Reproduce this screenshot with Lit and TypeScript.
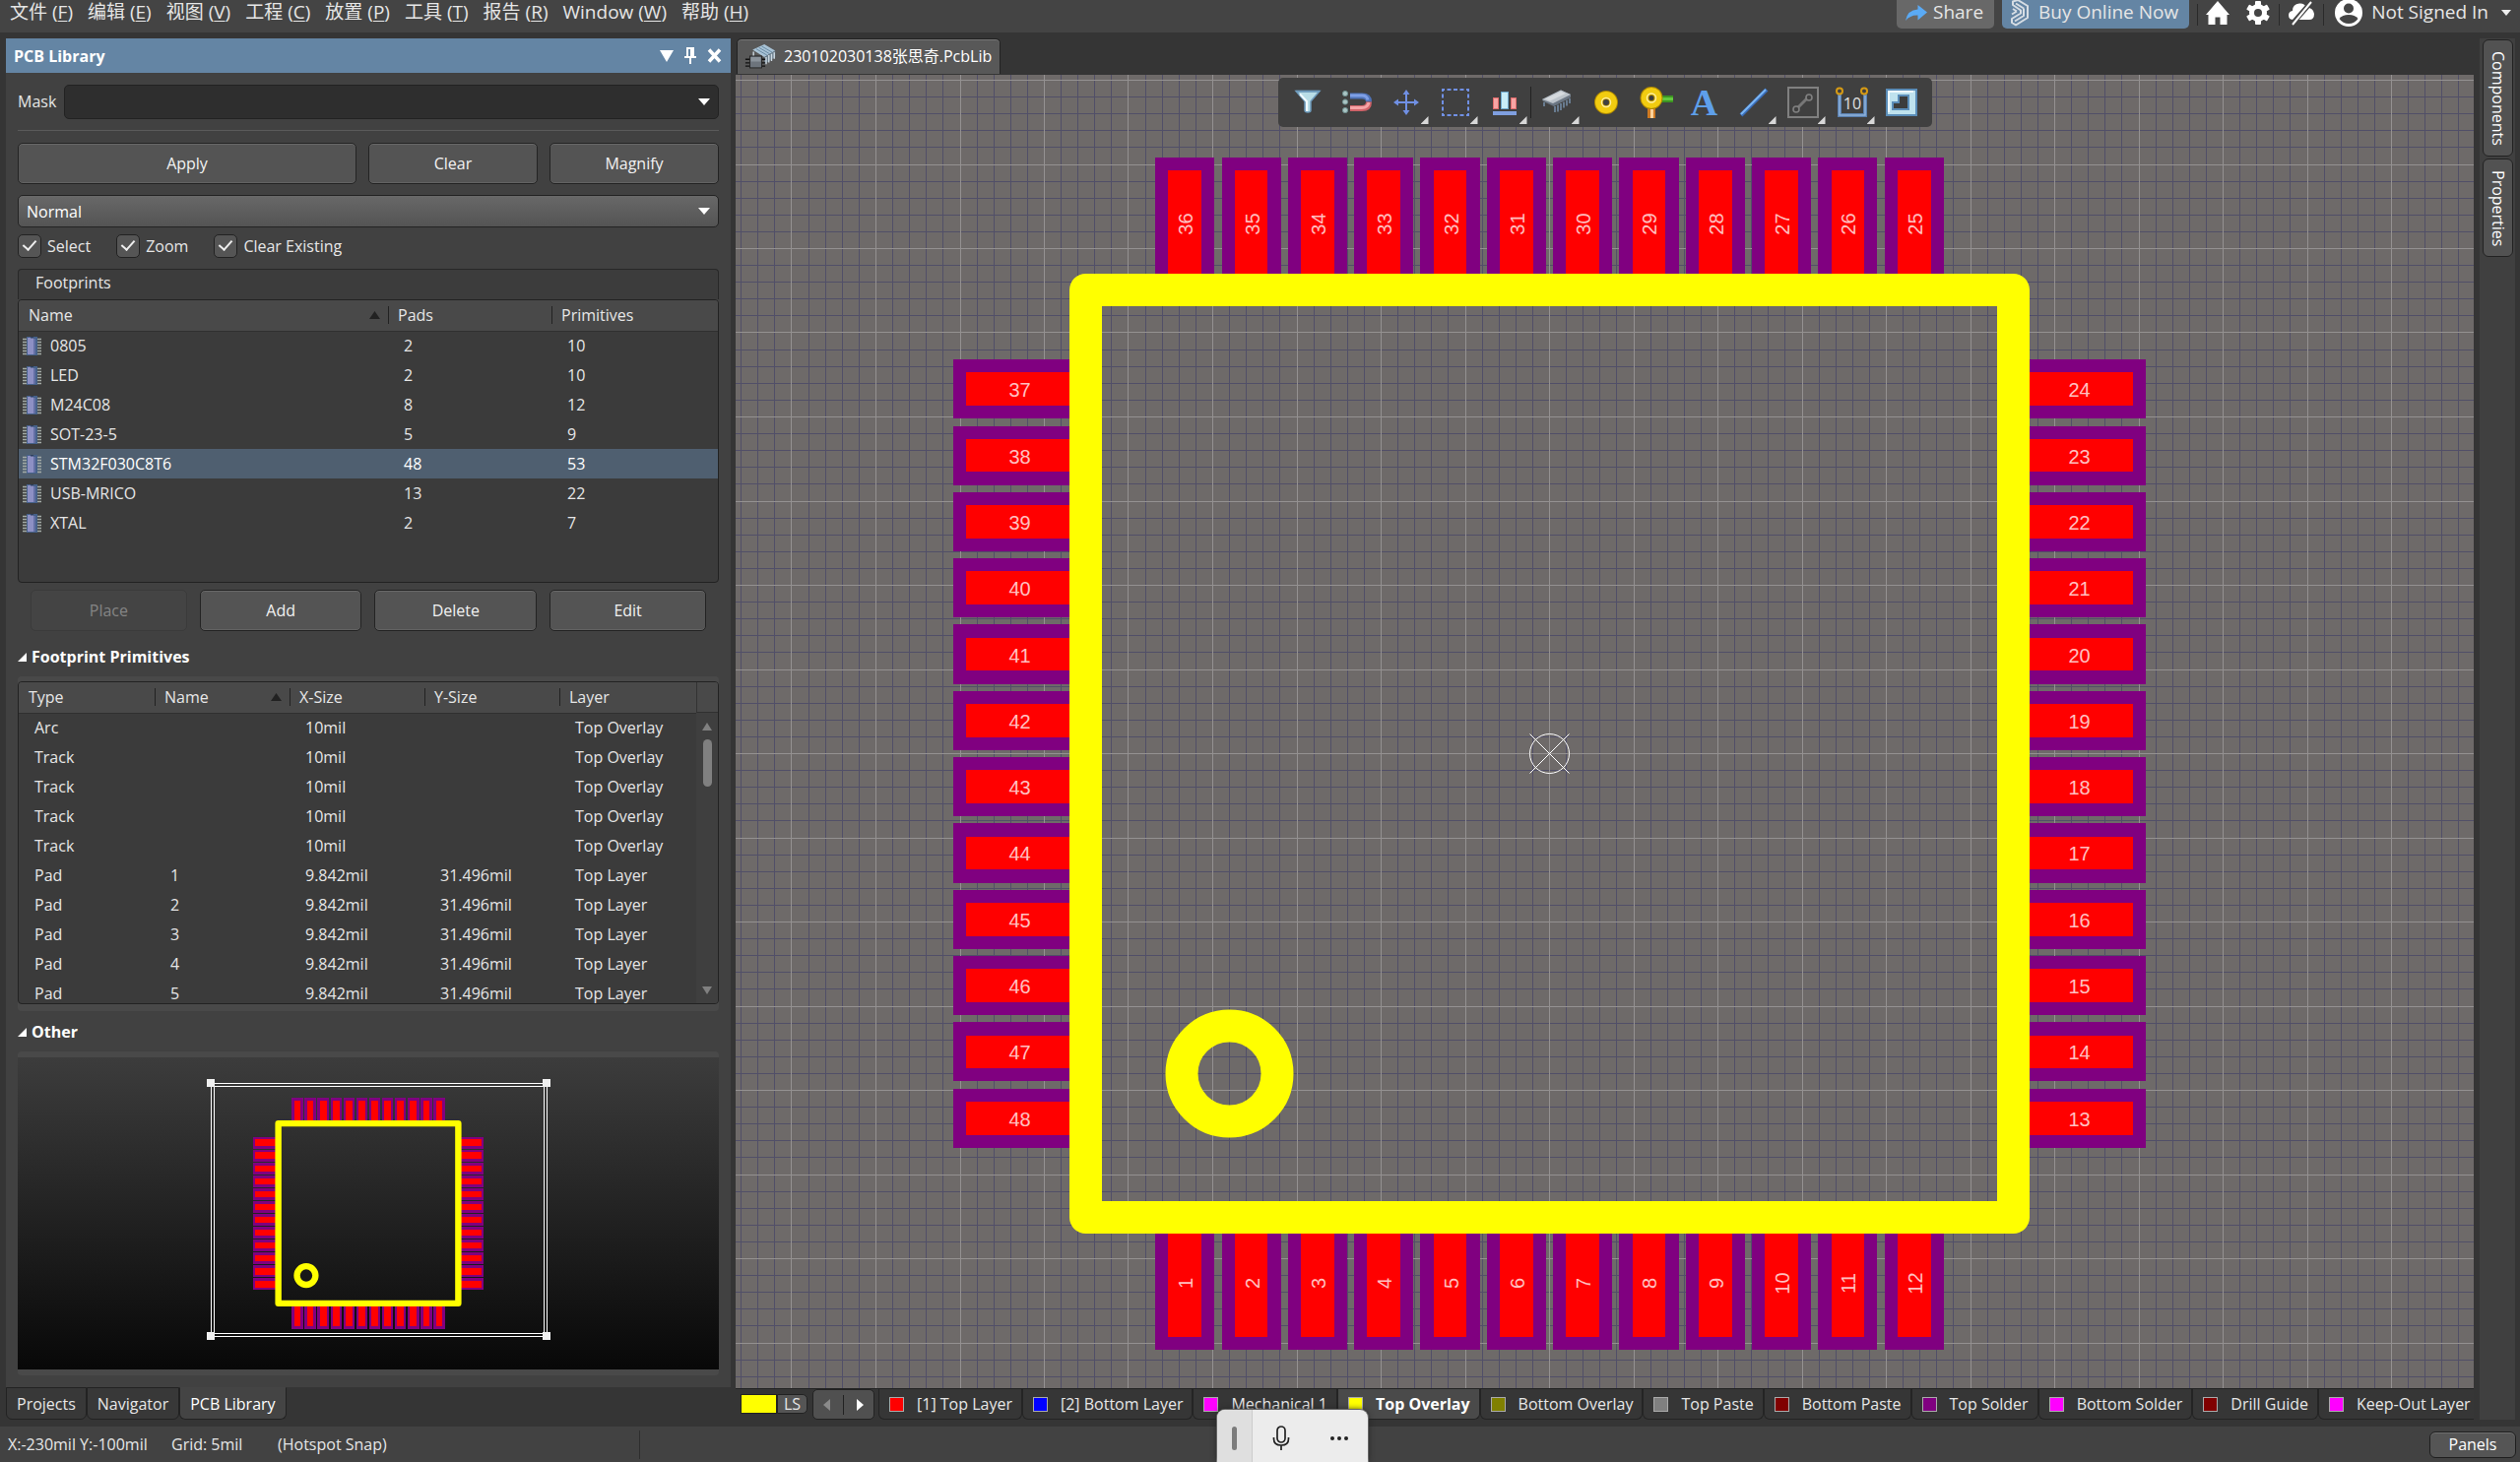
import { LitElement, html, svg, css } from "lit";
import { customElement, state } from "lit/decorators.js";
import { classMap } from "lit/directives/class-map.js";

/* ---------- shared styles ---------- */

const base = css`
  * { box-sizing: border-box; }
  :host {
    font-family: "Open Sans", "Noto Sans CJK SC", sans-serif;
    font-size: 16px;
    line-height: 20px;
    color: #e6e6e6;
  }
  svg { display: block; }
  button, input, select {
    font: inherit;
    color: inherit;
    margin: 0;
  }
  button {
    padding: 0;
    border: 0;
    background: none;
    white-space: nowrap;
  }
`;

/* ---------- data ---------- */

const MENUS: [string, string][] = [
  ["文件", "F"], ["编辑", "E"], ["视图", "V"], ["工程", "C"], ["放置", "P"],
  ["工具", "T"], ["报告", "R"], ["Window", "W"], ["帮助", "H"],
];

const FOOTPRINTS: [string, number, number][] = [
  ["0805", 2, 10],
  ["LED", 2, 10],
  ["M24C08", 8, 12],
  ["SOT-23-5", 5, 9],
  ["STM32F030C8T6", 48, 53],
  ["USB-MRICO", 13, 22],
  ["XTAL", 2, 7],
];

const PRIMITIVES: string[][] = [
  ["Arc", "", "10mil", "", "Top Overlay"],
  ["Track", "", "10mil", "", "Top Overlay"],
  ["Track", "", "10mil", "", "Top Overlay"],
  ["Track", "", "10mil", "", "Top Overlay"],
  ["Track", "", "10mil", "", "Top Overlay"],
  ["Pad", "1", "9.842mil", "31.496mil", "Top Layer"],
  ["Pad", "2", "9.842mil", "31.496mil", "Top Layer"],
  ["Pad", "3", "9.842mil", "31.496mil", "Top Layer"],
  ["Pad", "4", "9.842mil", "31.496mil", "Top Layer"],
  ["Pad", "5", "9.842mil", "31.496mil", "Top Layer"],
];

const LAYERS: [string, string][] = [
  ["[1] Top Layer", "#ff0000"],
  ["[2] Bottom Layer", "#0000ff"],
  ["Mechanical 1", "#ff00ff"],
  ["Top Overlay", "#ffff00"],
  ["Bottom Overlay", "#808000"],
  ["Top Paste", "#808080"],
  ["Bottom Paste", "#800000"],
  ["Top Solder", "#800080"],
  ["Bottom Solder", "#ff00ff"],
  ["Drill Guide", "#800000"],
  ["Keep-Out Layer", "#ff00ff"],
];

/* ---------- LQFP-48 drawing, in canvas units around its centre ---------- */

const PITCH = 67.31;
const OUTER = 605.5;
const PAD_W = 33.6;
const PAD_L = 107.7;
const MASK = 13.3;

function sidePads(angle: number) {
  const out = [];
  for (let i = 0; i < 12; i++) {
    const c = (i - 5.5) * PITCH;
    out.push(svg`
      <rect x=${c - PAD_W / 2 - MASK} y=${-OUTER} width=${PAD_W + 2 * MASK} height=${PAD_L + 2 * MASK} fill="#800080"></rect>
      <rect x=${c - PAD_W / 2} y=${-OUTER + MASK} width=${PAD_W} height=${PAD_L} fill="#ff0000"></rect>`);
  }
  return svg`<g transform="rotate(${angle})">${out}</g>`;
}

function chip() {
  return svg`
    <g shape-rendering="crispEdges">${[0, 90, 180, 270].map(sidePads)}</g>
    <rect x="-471" y="-471" width="942" height="942" fill="none" stroke="#ffff00" stroke-width="33" stroke-linejoin="round"></rect>
    <circle cx="-325" cy="325" r="48.5" fill="none" stroke="#ffff00" stroke-width="33"></circle>`;
}

function padLabels() {
  const out = [];
  const at = 538;
  for (let i = 0; i < 12; i++) {
    const c = (i - 5.5) * PITCH;
    out.push(svg`
      <text transform="translate(${c} ${at}) rotate(-90)" y="8">${i + 1}</text>
      <text x=${at} y=${-c + 8}>${13 + i}</text>
      <text transform="translate(${-c} ${-at}) rotate(-90)" y="8">${25 + i}</text>
      <text x=${-at} y=${c + 8}>${37 + i}</text>`);
  }
  return out;
}

function gridPath(major: boolean) {
  let d = "";
  for (let k = -130; k <= 160; k++) {
    if ((k % 5 === 0) !== major) continue;
    const x = Math.floor(826.5 + 17.1 * k);
    const y = Math.floor(689.5 + 17.1 * k);
    if (x >= 0) d += `M${x} 0h1v2400h-1z`;
    if (y >= 0) d += `M0 ${y}h3600v1h-3600z`;
  }
  return d;
}

/* ---------- icons ---------- */

const ic = {
  chip: svg`<svg width="19" height="19" viewBox="0 0 19 19">
    <path d="M0 2.500h19M0 5.500h19M0 8.500h19M0 11.500h19M0 14.500h19M0 17.500h19" stroke="#a3aba6" stroke-width="1.500"></path>
    <rect x="4" y="0" width="11" height="19" fill="#46618a"></rect><rect x="5" y="1" width="6" height="17" fill="#8d90c4"></rect><rect x="11" y="2" width="2" height="16" fill="#6470a6"></rect>
    <path d="M8 0h3v1.500H8z" fill="#2d3f5f"></path></svg>`,
  filter: svg`<svg width="32" height="32" viewBox="0 0 32 32"><path d="M4 4.500h24l-9 10.500v9q0 2-3 2t-3-2v-9z" fill="#b9dde6" stroke="#6d99ba" stroke-width="1.500"></path><path d="M4 4.800h24" stroke="#6d99ba" stroke-width="2"></path><path d="M8 7.500l7 7.500v10" fill="none" stroke="#f2fbff" stroke-width="2"></path></svg>`,
  magnet: svg`<svg width="34" height="32" viewBox="0 0 34 32"><g fill="#a9c4c4" stroke="#6f9090"><circle cx="5" cy="7" r="2.600"></circle><circle cx="5" cy="15.500" r="2.600"></circle><circle cx="5" cy="24" r="2.600"></circle></g><path d="M10 9.500h12q7 0 7 6" fill="none" stroke="#4f73b8" stroke-width="6"></path><path d="M10 9h12q5 0 6 4.500" fill="none" stroke="#7f9fe6" stroke-width="3"></path><path d="M29 15.500q0 6.500-7 6.500h-12" fill="none" stroke="#cf6268" stroke-width="6"></path><path d="M29 16q-1 5.500-7 5.500h-12" fill="none" stroke="#f5a3a6" stroke-width="3"></path></svg>`,
  move: svg`<svg width="28" height="28" viewBox="0 0 28 28"><path d="M14 3v22M3 14h22" stroke="#7090e4" stroke-width="2"></path><path d="M14 1l3.500 5h-7zM14 27l3.500-5h-7zM1 14l5-3.500v7zM27 14l-5-3.500v7z" fill="#7090e4"></path></svg>`,
  marquee: svg`<svg width="30" height="30" viewBox="0 0 30 30"><rect x="2" y="2" width="26" height="26" fill="none" stroke="#7090e4" stroke-width="2" stroke-dasharray="4 2.500" stroke-dashoffset="2"></rect></svg>`,
  align: svg`<svg width="28" height="28" viewBox="0 0 28 28"><rect x="2.500" y="9.500" width="5" height="11" fill="#f7a5a5" stroke="#e06b6b"></rect><rect x="20.500" y="9.500" width="5" height="11" fill="#f7a5a5" stroke="#e06b6b"></rect><rect x="10.500" y="3.500" width="7" height="17" fill="#c9edf7" stroke="#6fa9cc"></rect><rect x="2" y="23" width="24" height="4" fill="#7f9fe0"></rect></svg>`,
  component: svg`<svg width="34" height="30" viewBox="0 0 34 30"><path d="M4 15v4M15 19v6M18 17.500v7M21 16v7M24 14.500v6M27 12.500v6M30 11v5" stroke="#6d8298" stroke-width="1.800"></path><path d="M2 12L21 2.500 31 7v3L14 19 3 14z" fill="#6b7683"></path><path d="M2 12L21 2.500 31 7 13 16z" fill="#bcc3ca"></path><path d="M5 11.500L21 4l5 2-16 7.500z" fill="#d6dade"></path></svg>`,
  pad: svg`<svg width="26" height="26" viewBox="0 0 26 26"><circle cx="13" cy="13" r="7.500" fill="none" stroke="#b08a00" stroke-width="9"></circle><circle cx="13" cy="13" r="7.500" fill="none" stroke="#f2cc10" stroke-width="7"></circle><circle cx="13" cy="13" r="4.500" fill="none" stroke="#fff0a0" stroke-width="1.500"></circle></svg>`,
  via: svg`<svg width="36" height="34" viewBox="0 0 36 34"><rect x="22" y="10" width="14" height="7" fill="#3d9422"></rect><rect x="22" y="12" width="14" height="3" fill="#63c93f"></rect><rect x="10" y="20" width="8" height="13" fill="#cf7a22"></rect><rect x="13" y="20" width="3" height="13" fill="#ffd29a"></rect><circle cx="14" cy="12.500" r="7" fill="#3c3c3c" stroke="#b08a00" stroke-width="9"></circle><circle cx="14" cy="12.500" r="7" fill="none" stroke="#f2cc10" stroke-width="7"></circle><circle cx="14" cy="12.500" r="4.500" fill="none" stroke="#fff0a0" stroke-width="1.500"></circle></svg>`,
  line: svg`<svg width="30" height="30" viewBox="0 0 30 30"><path d="M2 28L28 2" stroke="#3b6db8" stroke-width="4"></path><path d="M2 27L27 2" stroke="#7ab6f5" stroke-width="2"></path></svg>`,
  track: svg`<svg width="34" height="34" viewBox="0 0 34 34"><rect x="2" y="2" width="30" height="30" fill="none" stroke="#808080" stroke-width="2"></rect><path d="M11 23L22 12" stroke="#777" stroke-width="3"></path><g fill="#3f3f3f" stroke="#808080" stroke-width="1.600"><circle cx="10" cy="24" r="3"></circle><circle cx="23" cy="12" r="3"></circle></g></svg>`,
  dim: svg`<svg width="34" height="32" viewBox="0 0 34 32"><path d="M4 8v21h26V8" fill="none" stroke="#5a80b0" stroke-width="4"></path><path d="M4 9v20h26V9" fill="none" stroke="#8fb2dc" stroke-width="1.500"></path><g fill="#3f3f3f" stroke="#d79b14" stroke-width="2"><circle cx="4" cy="4.500" r="3"></circle><circle cx="29" cy="4.500" r="3"></circle></g><text x="17" y="23" text-anchor="middle" font-size="16" fill="#e0e0e0">10</text></svg>`,
  region: svg`<svg width="32" height="28" viewBox="0 0 32 28"><rect width="32" height="28" fill="#5b8db8"></rect><rect x="2" y="2" width="28" height="24" fill="#bfe2ee"></rect><path d="M3 24V3h25" fill="none" stroke="#eefaff" stroke-width="2"></path><path d="M12 6h12v16H6v-9h6z" fill="#5b8db8"></path><path d="M14 8h8v12H8v-5h6z" fill="#3c3c3c"></path></svg>`,
  doc: svg`<svg width="33" height="26" viewBox="0 0 36 28"><path d="M9 7L22 1l12 7-12 7z" fill="#a9c3d6"></path><path d="M13 6l12 7M16 4.500l12 7M19 3l12 7" stroke="#64859f"></path><path d="M22 15l12-7v7l-12 8z" fill="#6c7f8e"></path><path d="M24 15v8M27 13v8M30 11.500v8M33 10v7M10 9v6" stroke="#cfdbe3" stroke-width="1.500"></path><path d="M1 17.500h5M1 21.500h5M1 25h5M19 17.500h4M19 21.500h4M19 25h4" stroke="#111" stroke-width="1.500"></path><rect x="6" y="14" width="13" height="13" fill="#6d747c" stroke="#222"></rect><path d="M7 15h11v5H7z" fill="#8b939b"></path></svg>`,
  share: svg`<svg width="22" height="20" viewBox="0 0 22 20"><path d="M0 18Q2 7 12.500 6.500V2L22 9.500 12.500 17.500V12.500Q5 12 0 18z" fill="#5aaaf5"></path></svg>`,
  logo: svg`<svg width="20" height="28" viewBox="0 0 20 28"><path d="M3 6V2.500L8 1l10 6v12L6 26.500l-4-2.500v-4l9-5.500v-3L3 6zM3 10l4 2.500M2 15.500l5-3M14 9.500v7.500L5 22.500M6 4.500l8 5" fill="none" stroke="#d6dde4" stroke-width="2" stroke-linejoin="round"></path></svg>`,
  home: svg`<svg width="24" height="24" viewBox="0 0 24 24"><path d="M12 0L24 14H21.500V24H14.500V16.500H9.500V24H2.500V14H0z" fill="#fff"></path></svg>`,
  gear: svg`<svg width="26" height="26" viewBox="0 0 26 26"><g fill="#fff"><circle cx="13" cy="13" r="9"></circle>${[0, 60, 120].map((a) => svg`<rect x="10" y="1" width="6" height="24" rx="1" transform="rotate(${a} 13 13)"></rect>`)}</g><circle cx="13" cy="13" r="4" fill="#444"></circle></svg>`,
  cloud: svg`<svg width="28" height="26" viewBox="0 0 28 26"><path d="M6 20Q1 20 1 15.500 1 11.500 5 11 5 4 12 3.500 17 3 19 7.500 26 7.500 27 14 27 20 22 20z" fill="#fff"></path><path d="M4 25L25 1" stroke="#444" stroke-width="5"></path><path d="M5 25L24 2" stroke="#fff" stroke-width="2"></path></svg>`,
  person: svg`<svg width="28" height="28" viewBox="0 0 28 28"><circle cx="14" cy="14" r="14" fill="#fff"></circle><circle cx="14" cy="9.500" r="5" fill="#444"></circle><path d="M4.500 20q3-4 9.500-4t9.500 4q-3.500 5-9.500 5t-9.500-5z" fill="#444"></path></svg>`,
  pin: svg`<svg width="12" height="17" viewBox="0 0 12 17"><path d="M2 0h8v9h2v2H0V9h2z" fill="#fff"></path><path d="M4 2h2v7H4z" fill="#6485a4"></path><path d="M6 10v7" stroke="#fff" stroke-width="2"></path></svg>`,
  close: svg`<svg width="15" height="15" viewBox="0 0 15 15"><path d="M2 1.500l11 12M13 1.500l-11 12" stroke="#fff" stroke-width="3.500"></path></svg>`,
  down: svg`<svg width="12" height="7" viewBox="0 0 12 7"><path d="M0 0h12L6 7z" fill="#fff"></path></svg>`,
  mic: svg`<svg width="18" height="26" viewBox="0 0 18 26"><rect x="5" y="1" width="8" height="16" rx="4" fill="none" stroke="#222" stroke-width="1.700"></rect><path d="M1.500 12v1.500q0 6.500 7.500 6.500t7.500-6.500V12M9 20v5" fill="none" stroke="#222" stroke-width="1.700"></path></svg>`,
};

/* ---------- menu bar ---------- */

@customElement("top-bar")
class TopBar extends LitElement {
  static styles = [base, css`
    :host {
      display: flex;
      flex: 0 0 33px;
      justify-content: space-between;
      align-items: flex-start;
      background: #444;
      font-size: 19px;
      line-height: 25px;
      overflow: hidden;
    }
    nav { display: flex; gap: 15px; padding-left: 10px; }
    u { text-underline-offset: 2px; text-decoration-thickness: 1px; }
    .tools { display: flex; align-items: center; height: 29px; }
    .pill {
      display: flex;
      align-items: center;
      height: 29px;
      padding: 0 11px 4px 9px;
      gap: 6px;
      border-radius: 0 0 5px 5px;
      background: #686868;
      margin-right: 8px;
    }
    .buy { background: #6485a4; padding-left: 8px; gap: 9px; margin-right: 8px; }
    .sep { width: 1px; height: 22px; background: #2a2a2a; }
    .icon { padding: 0 8px 3px 8px; }
    .user { display: flex; align-items: center; gap: 9px; padding: 0 9px 4px 11px; }
    .user svg:last-child { margin-left: 4px; }
  `];
  render() {
    return html`
      <nav>${MENUS.map(([t, k]) => html`<button>${t} (<u>${k}</u>)</button>`)}</nav>
      <div class="tools">
        <button class="pill">${ic.share}Share</button>
        <button class="pill buy">${ic.logo}Buy Online Now</button>
        <span class="sep"></span>
        <button class="icon" aria-label="Home">${ic.home}</button>
        <button class="icon" aria-label="Settings">${ic.gear}</button>
        <span class="sep"></span>
        <button class="icon" aria-label="Cloud">${ic.cloud}</button>
        <span class="sep"></span>
        <button class="user">${ic.person}Not Signed In<svg width="10" height="6" viewBox="0 0 10 6"><path d="M0 0h10L5 6z" fill="#eee"></path></svg></button>
      </div>`;
  }
}

/* ---------- library panel ---------- */

@customElement("library-panel")
class LibraryPanel extends LitElement {
  @state() private selected = 4;

  static styles = [base, css`
    :host { display: flex; flex-direction: column; flex: 0 0 736px; min-height: 0; }
    .panel { display: flex; flex-direction: column; flex: 1; min-height: 0; background: #414141; }
    header {
      display: flex;
      align-items: center;
      gap: 11px;
      height: 35px;
      padding: 0 9px 0 8px;
      background: #6485a4;
      color: #fff;
    }
    h2, h3 { margin: 0; font-size: 16px; line-height: 20px; font-weight: 700; color: #fff; }
    h2 { flex: 1; }
    .body { display: flex; flex-direction: column; flex: 1; min-height: 0; padding: 12px; }
    .mask { display: flex; align-items: center; gap: 8px; }
    .mask label { padding-bottom: 2px; }
    .combo { display: flex; position: relative; }
    .mask .combo { flex: 1; }
    .combo input {
      flex: 1;
      height: 35px;
      padding: 0 32px 0 8px;
      border: 1px solid #222;
      border-radius: 5px;
      background: #2e2e2e;
    }
    .arrow { position: absolute; right: 9px; top: 14px; pointer-events: none; }
    hr { width: 100%; height: 1px; margin: 11px 0 12px; border: 0; background: #5a5a5a; }
    .row { display: grid; grid-template-columns: 344fr 172fr 172fr; gap: 12px; }
    .btn {
      height: 42px;
      border: 1px solid #232323;
      border-radius: 5px;
      background: #545454;
      box-shadow: inset 0 1px #686868, inset 0 -1px #626262;
      color: #f2f2f2;
    }
    .btn:disabled { background: #444; border-color: #3b3b3b; box-shadow: none; color: #858585; }
    .combo select {
      appearance: none;
      flex: 1;
      height: 33px;
      margin-top: 11px;
      padding: 1px 8px 0;
      border: 1px solid #232323;
      border-radius: 5px;
      background: linear-gradient(#686868, #545454);
      color: #fff;
    }
    .combo select + .arrow { top: 24px; }
    .checks { display: flex; gap: 26px; margin: 6px 0 11px; }
    .checks label { display: flex; align-items: center; gap: 6px; height: 25px; }
    .checks input {
      appearance: none;
      display: grid;
      place-items: center;
      width: 24px;
      height: 24px;
      border: 1px solid #222;
      border-radius: 5px;
      background: #555;
    }
    .checks input:checked::before {
      content: "";
      width: 6px;
      height: 11px;
      margin-bottom: 4px;
      border: solid #eee;
      border-width: 0 2px 2px 0;
      transform: rotate(42deg);
    }
    .caption {
      height: 31px;
      padding: 3px 17px;
      border: 1px solid #282828;
      border-bottom: 0;
      border-radius: 4px 4px 0 0;
      background: #3c3c3c;
    }
    .list {
      display: flex;
      height: 288px;
      border: 1px solid #222;
      border-radius: 4px;
      background: #3b3b3b;
      overflow: hidden;
    }
    .list.prims { height: 328px; }
    table { flex: 1; width: 100%; border-collapse: collapse; table-layout: fixed; align-self: flex-start; }
    th {
      height: 31px;
      padding: 0;
      font-weight: 400;
      text-align: left;
      background: #494949;
      border-bottom: 1px solid #303030;
    }
    .head {
      display: flex;
      justify-content: space-between;
      align-items: center;
      height: 18px;
      padding: 0 8px 0 9px;
      border-left: 1px solid #222;
      white-space: nowrap;
    }
    th:first-child .head { border-left-color: transparent; }
    td { height: 30px; padding: 0 0 0 16px; white-space: nowrap; }
    .name { display: flex; align-items: center; gap: 9px; margin-left: -12px; }
    .on td { background: #4f5f70; color: #fff; }
    .c1 { width: 375px; } .c2 { width: 166px; }
    .n1 { width: 138px; } .n2 { width: 137px; }
    .bar { display: flex; flex-direction: column; align-items: center; width: 22px; background: #3f3f3f; }
    .cap { width: 100%; height: 31px; border-left: 1px solid #333; background: #494949; border-bottom: 1px solid #303030; margin-bottom: 10px; }
    .thumb { width: 9px; height: 48px; margin: 9px 0 auto; border-radius: 5px; background: #808080; }
    .bar svg:last-child { margin-bottom: 9px; }
    .actions { display: grid; grid-template-columns: 159fr 165fr 165fr 159fr; gap: 13px; padding: 7px 13px 0; }
    .section { display: flex; align-items: center; gap: 5px; margin: 16px 0 10px; }
    .well { padding: 5px 0 7px; border-radius: 4px; background: #494949; }
    .other { margin: 11px 0 10px; }
    .grow { display: flex; flex: 1; min-height: 0; padding: 6px 0; }
    .preview { flex: 1; min-height: 0; background: linear-gradient(#3c3c3c, #080808); }
    .tabs { display: flex; height: 33px; }
    .tabs button {
      height: 33px;
      padding: 0 10px;
      border: 1px solid #222;
      border-radius: 0 0 6px 6px;
      background: #383838;
    }
    .tabs .cur { background: #444; border-top-color: #444; color: #fff; }
  `];

  private sorter() {
    return svg`<svg width="11" height="8" viewBox="0 0 11 8"><path d="M5.500 0L11 8H0z" fill="#222"></path></svg>`;
  }
  private corner() {
    return svg`<svg width="9" height="9" viewBox="0 0 9 9"><path d="M9 0v9H0z" fill="#fff"></path></svg>`;
  }

  render() {
    return html`
      <section class="panel">
        <header>
          <h2>PCB Library</h2>
          <button aria-label="Menu"><svg width="14" height="12" viewBox="0 0 14 12"><path d="M0 0h14L7 12z" fill="#fff"></path></svg></button>
          <button aria-label="Pin">${ic.pin}</button>
          <button aria-label="Close">${ic.close}</button>
        </header>
        <div class="body">
          <div class="mask">
            <label for="mask">Mask</label>
            <div class="combo"><input id="mask" type="text" /><span class="arrow">${ic.down}</span></div>
          </div>
          <hr />
          <div class="row">
            <button class="btn">Apply</button>
            <button class="btn">Clear</button>
            <button class="btn">Magnify</button>
          </div>
          <div class="combo">
            <select aria-label="Mode"><option>Normal</option></select><span class="arrow">${ic.down}</span>
          </div>
          <div class="checks">
            ${["Select", "Zoom", "Clear Existing"].map((t) => html`<label><input type="checkbox" checked />${t}</label>`)}
          </div>
          <div class="caption">Footprints</div>
          <div class="list">
            <table>
              <colgroup><col class="c1" /><col class="c2" /><col /></colgroup>
              <thead><tr>
                <th><div class="head">Name ${this.sorter()}</div></th>
                <th><div class="head">Pads</div></th>
                <th><div class="head">Primitives</div></th>
              </tr></thead>
              <tbody>
                ${FOOTPRINTS.map(([n, p, q], i) => html`
                  <tr class=${classMap({ on: i === this.selected })} @click=${() => (this.selected = i)}>
                    <td><div class="name">${ic.chip}${n}</div></td><td>${p}</td><td>${q}</td>
                  </tr>`)}
              </tbody>
            </table>
          </div>
          <div class="actions">
            <button class="btn" disabled>Place</button>
            <button class="btn">Add</button>
            <button class="btn">Delete</button>
            <button class="btn">Edit</button>
          </div>
          <div class="section">${this.corner()}<h3>Footprint Primitives</h3></div>
          <div class="well">
            <div class="list prims">
              <table>
                <colgroup><col class="n1" /><col class="n2" /><col class="n2" /><col class="n2" /><col /></colgroup>
                <thead><tr>
                  ${["Type", "Name", "X-Size", "Y-Size", "Layer"].map((t) => html`<th><div class="head">${t} ${t === "Name" ? this.sorter() : ""}</div></th>`)}
                </tr></thead>
                <tbody>
                  ${PRIMITIVES.map((r) => html`<tr>${r.map((c) => html`<td>${c}</td>`)}</tr>`)}
                </tbody>
              </table>
              <div class="bar">
                <span class="cap"></span>
                <svg width="10" height="8" viewBox="0 0 10 8"><path d="M5 0l5 8H0z" fill="#808080"></path></svg>
                <span class="thumb"></span>
                <svg width="10" height="8" viewBox="0 0 10 8"><path d="M5 8l5-8H0z" fill="#808080"></path></svg>
              </div>
            </div>
          </div>
          <div class="section other">${this.corner()}<h3>Other</h3></div>
          <div class="well grow">
            <svg class="preview" width="100%" height="100%" viewBox="-356 -158 712 316">
              <g transform="scale(0.194)">${chip()}</g>
              <g fill="none" stroke="#fff" shape-rendering="crispEdges">
                <path d="M-159.500 -132.500h341v257h-341zM-156.500 -129.500h335v251h-335z"></path>
                <path d="M-164 -137h8v8h-8zM177 -137h8v8h-8zM-164 120h8v8h-8zM177 120h8v8h-8z" fill="#f0f0f0" stroke="none"></path>
              </g>
            </svg>
          </div>
        </div>
      </section>
      <div class="tabs">
        <button>Projects</button><button>Navigator</button><button class="cur">PCB Library</button>
      </div>`;
  }
}

/* ---------- document area ---------- */

@customElement("pcb-document")
class PcbDocument extends LitElement {
  @state() private layer = 3;

  static styles = [base, css`
    :host { display: flex; flex-direction: column; flex: 1; min-width: 0; min-height: 0; }
    .doctab {
      display: flex;
      align-items: center;
      align-self: flex-start;
      gap: 7px;
      height: 36px;
      margin: 0 0 1px 1px;
      padding: 0 8px 1px 7px;
      border: 1px solid #222;
      border-bottom: 0;
      border-radius: 5px 5px 0 0;
      background: #585858;
      box-shadow: inset 0 1px #777;
      color: #fff;
    }
    .canvas { position: relative; flex: 1; min-height: 0; overflow: hidden; background: #6e6a69; }
    .canvas > svg { position: absolute; inset: 0; }
    .pins text {
      font-family: "Liberation Sans", sans-serif;
      font-size: 20px;
      fill: #ffc0c0;
      text-anchor: middle;
    }
    .toolbar {
      position: absolute;
      top: 3px;
      left: 0;
      right: 0;
      display: flex;
      align-items: center;
      width: max-content;
      height: 50px;
      margin: 0 auto;
      padding: 0 6px 0 5px;
      border-radius: 5px;
      background: #404040;
    }
    .toolbar button { position: relative; display: grid; place-items: center; width: 50px; height: 50px; }
    .more::after {
      content: "";
      position: absolute;
      right: 2px;
      bottom: 3px;
      width: 8px;
      height: 8px;
      background: #d8d8d8;
      clip-path: polygon(100% 0, 100% 100%, 0 100%);
    }
    .rule { width: 1px; height: 32px; margin: 0 1px; background: #222; }
    .letter { font: 700 38px/48px "Liberation Serif", serif; color: #5e9fea; }
    .layers { display: flex; height: 32px; overflow: hidden; border-top: 1px solid #222; }
    .set { display: flex; flex: none; margin: 5px 5px 0 5px; height: 20px; }
    .set span { width: 37px; background: #ff0; border: 1px solid #222; }
    .set button { width: 31px; line-height: 18px; background: #555; border: 1px solid #222; border-radius: 0 5px 5px 0; }
    .nav { display: flex; flex: none; align-items: center; justify-content: space-around; width: 63px; margin-right: 4px; border: 1px solid #222; border-radius: 5px; background: #505050; }
    .nav i { width: 1px; height: 20px; background: #222; }
    .nav button { padding: 4px 8px; }
    .layer {
      display: flex;
      align-items: center;
      gap: 13px;
      flex: none;
      padding: 0 9px 0 10px;
      border: 1px solid #242424;
      border-top: 0;
      border-radius: 0 0 6px 6px;
      background: #363636;
    }
    .layer.on { background: #4a4a4a; font-weight: 700; color: #fff; }
    .layer svg { stroke: #aaa; }
  `];

  private tool(name: string, icon: unknown, more = false) {
    return html`<button aria-label=${name} class=${classMap({ more })}>${icon}</button>`;
  }

  render() {
    return html`
      <div class="doctab">${ic.doc}<span>230102030138张思奇.PcbLib</span></div>
      <div class="canvas">
        <svg width="100%" height="100%">
          <path d=${gridPath(false)} fill="#514f68" shape-rendering="crispEdges"></path>
          <path d=${gridPath(true)} fill="#949191" shape-rendering="crispEdges"></path>
          <svg x="826.500" y="689.500" overflow="visible">
            ${chip()}
            <g class="pins">${padLabels()}</g>
            <g fill="none" stroke="#fff"><circle r="20"></circle><path d="M-20-20l40 40M20-20l-40 40"></path></g>
          </svg>
        </svg>
        <div class="toolbar">
          ${this.tool("Filter", ic.filter)}
          ${this.tool("Snap", ic.magnet)}
          ${this.tool("Move", ic.move, true)}
          ${this.tool("Select", ic.marquee, true)}
          ${this.tool("Align", ic.align, true)}
          <span class="rule"></span>
          ${this.tool("Component", ic.component, true)}
          ${this.tool("Pad", ic.pad)}
          ${this.tool("Via", ic.via)}
          <button class="letter" aria-label="Text">A</button>
          ${this.tool("Line", ic.line, true)}
          ${this.tool("Track", ic.track, true)}
          ${this.tool("Dimension", ic.dim, true)}
          ${this.tool("Region", ic.region)}
        </div>
      </div>
      <div class="layers">
        <div class="set"><span></span><button>LS</button></div>
        <div class="nav">
          <button aria-label="Previous"><svg width="7" height="12" viewBox="0 0 7 12"><path d="M7 0v12L0 6z" fill="#8a8a8a"></path></svg></button><i></i>
          <button aria-label="Next"><svg width="7" height="12" viewBox="0 0 7 12"><path d="M0 0v12l7-6z" fill="#fff"></path></svg></button>
        </div>
        ${LAYERS.map(([name, color], i) => html`
          <button class=${classMap({ layer: true, on: i === this.layer })} @click=${() => (this.layer = i)}>
            <svg width="15" height="15"><rect x="0.500" y="0.500" width="14" height="14" fill=${color}></rect></svg>${name}
          </button>`)}
      </div>`;
  }
}

/* ---------- application ---------- */

@customElement("app-root")
class AppRoot extends LitElement {
  static styles = [base, css`
    :host {
      position: relative;
      display: flex;
      flex-direction: column;
      height: 100vh;
      overflow: hidden;
      background: #353535;
    }
    main { display: flex; flex: 1; min-height: 0; padding: 6px 5px 7px 6px; }
    pcb-document { margin: 0 6px 0 5px; }
    .side { display: flex; flex-direction: column; gap: 2px; width: 36px; padding: 1px 2px 0 3px; background: #404040; }
    .side button {
      writing-mode: vertical-rl;
      padding: 11px 4px 10px;
      border: 1px solid #222;
      border-radius: 6px;
      background: #525252;
      color: #fff;
    }
    footer { display: flex; align-items: center; height: 36px; padding: 0 4px 0 8px; background: #424242; }
    .pos { width: 166px; }
    .grid { width: 108px; }
    .snap { width: 367px; }
    .sep { flex: 1; height: 29px; border-left: 1px solid #2e2e2e; }
    .panels {
      width: 88px;
      height: 27px;
      border: 1px solid #1f1f1f;
      border-radius: 6px;
      background: #555;
      box-shadow: inset 0 1px #707070;
      color: #fff;
    }
    .voice {
      position: absolute;
      left: 1236px;
      bottom: 0;
      display: flex;
      align-items: center;
      width: 153px;
      height: 53px;
      border-radius: 8px 8px 0 0;
      background: #ececec;
      box-shadow: 0 0 6px #222, 0 0 0 1px #999;
      overflow: hidden;
    }
    .grip { display: grid; place-items: center; width: 36px; height: 100%; padding-top: 4px; background: #dfdfdf; border-right: 1px solid #ccc; }
    .grip i { width: 5px; height: 24px; border-radius: 3px; background: #7c7c7c; }
    .voice button { display: grid; place-items: center; flex: 1; height: 100%; padding-top: 4px; }
  `];
  render() {
    return html`
      <top-bar></top-bar>
      <main>
        <library-panel></library-panel>
        <pcb-document></pcb-document>
        <div class="side"><button>Components</button><button>Properties</button></div>
      </main>
      <footer>
        <span class="pos">X:-230mil Y:-100mil</span>
        <span class="grid">Grid: 5mil</span>
        <span class="snap">(Hotspot Snap)</span>
        <span class="sep"></span>
        <button class="panels">Panels</button>
      </footer>
      <div class="voice">
        <span class="grip"><i></i></span>
        <button aria-label="Microphone">${ic.mic}</button>
        <button aria-label="More"><svg width="20" height="6" viewBox="0 0 20 6"><g fill="#222"><circle cx="3" cy="3" r="2"></circle><circle cx="10" cy="3" r="2"></circle><circle cx="17" cy="3" r="2"></circle></g></svg></button>
      </div>`;
  }
}
